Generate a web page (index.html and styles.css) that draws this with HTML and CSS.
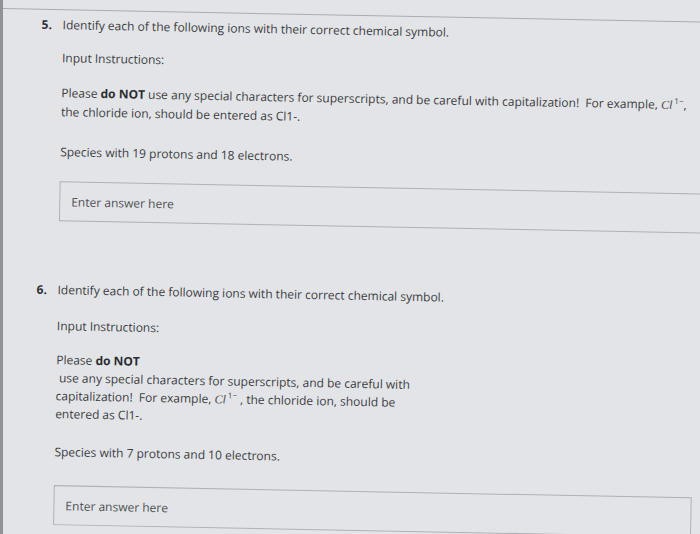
FILE: index.html
```html
<!DOCTYPE html>
<html lang="en">
<head>
<meta charset="utf-8">
<title>Questions</title>
<link rel="stylesheet" href="styles.css">
</head>
<body>
<div class="frame">
  <div class="page">
    <section class="q q-first">
      <div class="num">5.</div>
      <div class="body">
        <p class="title">Identify each of the following ions with their correct chemical symbol.</p>
        <p class="label">Input Instructions:</p>
        <p class="para wide">Please <b>do NOT</b> use any special characters for superscripts, and be careful with capitalization!&nbsp; For example, <span class="math"><i>Cl</i><sup>1&minus;</sup></span>, the chloride ion, should be entered as Cl1-.</p>
        <p class="species">Species with 19 protons and 18 electrons.</p>
        <div class="answer answer-1">Enter answer here</div>
      </div>
    </section>
    <section class="q q-second">
      <div class="num">6.</div>
      <div class="body">
        <p class="title">Identify each of the following ions with their correct chemical symbol.</p>
        <p class="label">Input Instructions:</p>
        <p class="para narrow">Please <b>do NOT</b><br>&nbsp;use any special characters for superscripts, and be careful with capitalization!&nbsp; For example, <span class="math"><i>Cl</i><sup>1&minus;</sup></span> , the chloride ion, should be entered as Cl1-.</p>
        <p class="species species-2">Species with 7 protons and 10 electrons.</p>
        <div class="answer answer-2">Enter answer here</div>
      </div>
    </section>
  </div>
</div>
</body>
</html>
```

FILE: styles.css
```css
html, body {
  margin: 0;
  padding: 0;
  height: 100%;
  background: #e2e4e8;
  overflow: hidden;
}

.frame {
  height: 100%;
  border-left: 3px solid #8f9297;
  box-sizing: border-box;
  overflow: hidden;
}

.page {
  width: 760px;
  transform: rotate(1.1deg);
  transform-origin: 0 0;
  margin-left: -3px;
  font-family: "Open Sans", "Liberation Sans", sans-serif;
  font-size: 12px;
  line-height: 18px;
  color: #3c3d41;
}

.q {
  display: grid;
  grid-template-columns: 42px 21px 1fr;
}

.q-first {
  margin-top: 8px;
  border-top: 1px solid #a9acb2;
  padding-top: 6px;
}

.q-second {
  margin-top: 60px;
}

.num {
  grid-column: 2;
  font-weight: 700;
  color: #2e2f33;
}

.body {
  grid-column: 3;
  padding-right: 40px;
}

p {
  margin: 0;
}

.label {
  margin-top: 15px;
}

.q-second .label {
  margin-top: 18px;
}

.para {
  margin-top: 16px;
}

.para.wide {
  line-height: 19px;
  max-width: 640px;
}

.para.narrow {
  max-width: 356px;
}

.para b {
  font-weight: 700;
  color: #2b2c30;
}

.math {
  line-height: 0;
}

.math i {
  font-family: "Liberation Serif", "DejaVu Serif", serif;
  font-style: italic;
  font-size: 12px;
  padding-right: 2px;
  color: #4a4b50;
}

.math sup {
  font-size: 8px;
  line-height: 0;
  vertical-align: 5px;
  color: #4a4b50;
}

.species {
  margin-top: 22px;
}

.species-2 {
  margin-top: 20px;
}

.answer {
  margin-top: 20px;
  height: 40px;
  box-sizing: border-box;
  border: 1px solid #aeb1b7;
  display: flex;
  align-items: center;
  padding-left: 11px;
  padding-top: 2px;
  color: #4e5054;
}

.answer-1 {
  width: 660px;
}

.answer-2 {
  width: 638px;
  margin-top: 24px;
}
```
